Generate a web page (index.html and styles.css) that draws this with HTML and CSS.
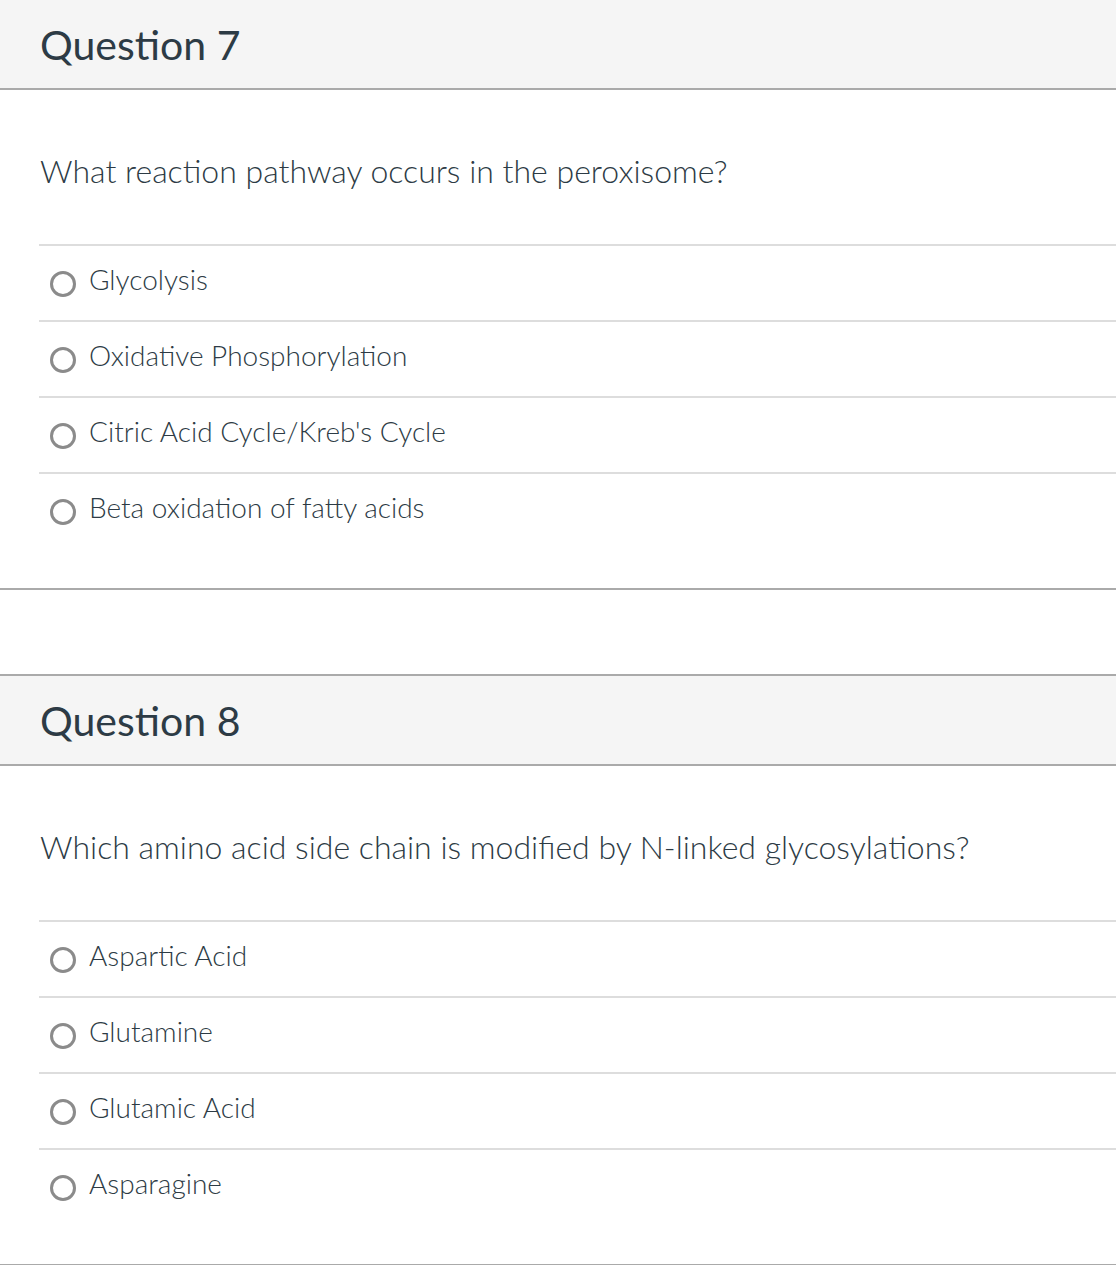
FILE: index.html
```html
<!DOCTYPE html>
<html>
<head>
<meta charset="utf-8">
<link rel="stylesheet" href="styles.css">
</head>
<body>
<div class="question">
  <div class="q-header"><h2 class="q-title">Question 7</h2></div>
  <div class="q-text">What reaction pathway occurs in the peroxisome?</div>
  <div class="answers">
    <label class="answer"><span class="radio"></span><span class="a-text">Glycolysis</span></label>
    <label class="answer"><span class="radio"></span><span class="a-text">Oxidative Phosphorylation</span></label>
    <label class="answer"><span class="radio"></span><span class="a-text">Citric Acid Cycle/Kreb's Cycle</span></label>
    <label class="answer"><span class="radio"></span><span class="a-text">Beta oxidation of fatty acids</span></label>
  </div>
</div>
<div class="question q-next">
  <div class="q-header"><h2 class="q-title">Question 8</h2></div>
  <div class="q-text">Which amino acid side chain is modified by N-linked glycosylations?</div>
  <div class="answers">
    <label class="answer"><span class="radio"></span><span class="a-text">Aspartic Acid</span></label>
    <label class="answer"><span class="radio"></span><span class="a-text">Glutamine</span></label>
    <label class="answer"><span class="radio"></span><span class="a-text">Glutamic Acid</span></label>
    <label class="answer"><span class="radio"></span><span class="a-text">Asparagine</span></label>
  </div>
</div>
</body>
</html>
```

FILE: styles.css
```css
html, body {
  margin: 0;
  padding: 0;
  background: #ffffff;
}
body {
  font-family: Lato, "Open Sans", sans-serif;
  color: #2d3b45;
  overflow: hidden;
}
.question {
  border-bottom: 2px solid #aaaaaa;
}
.q-next {
  margin-top: 84px;
  border-top: 2px solid #aaaaaa;
}
.q-header {
  background: #f5f5f5;
  height: 88px;
  border-bottom: 2px solid #aaaaaa;
  display: flex;
  align-items: center;
  padding-left: 40px;
}
.q-title {
  margin: 0;
  font-size: 41px;
  font-weight: 400;
  line-height: 1;
  color: #2d3b45;
}
.q-text {
  height: 154px;
  display: flex;
  align-items: center;
  padding-left: 40px;
  padding-top: 6px;
  box-sizing: border-box;
  font-size: 32px;
  font-weight: 300;
  color: #2d3b45;
}
.answers {
  margin-left: 39px;
  display: flex;
  flex-direction: column;
}
.answer {
  border-top: 2px solid #dddddd;
  height: 74px;
  display: flex;
  align-items: center;
  gap: 13px;
  padding-left: 11px;
}
.answer:last-child {
  padding-bottom: 40px;
}
.radio {
  width: 20px;
  height: 20px;
  border: 3px solid #8b8b8b;
  border-radius: 50%;
  flex: none;
  margin-top: 2px;
}
.a-text {
  font-size: 28px;
  font-weight: 300;
  color: #2d3b45;
  line-height: 1;
  margin-bottom: 8px;
}
```
